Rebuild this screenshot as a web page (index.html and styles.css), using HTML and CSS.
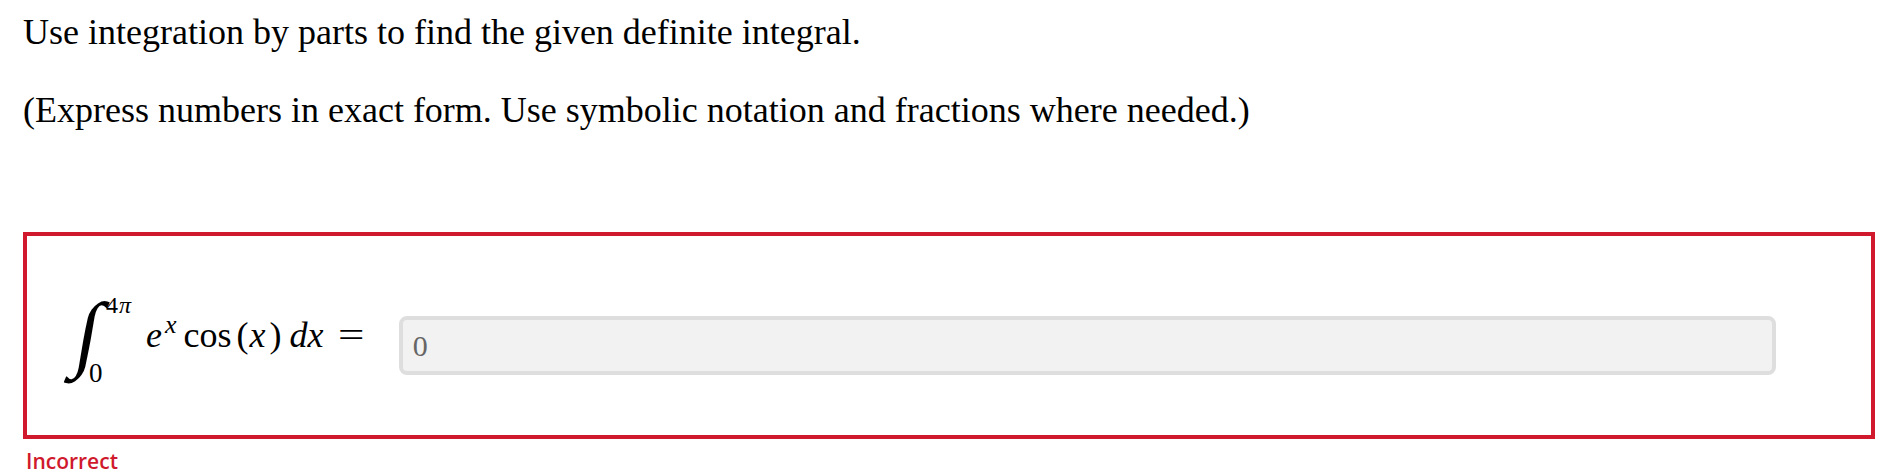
FILE: index.html
```html
<!DOCTYPE html>
<html lang="en">
<head>
<meta charset="utf-8">
<title>Integration by parts</title>
<link rel="stylesheet" href="styles.css">
</head>
<body>
<div class="page">
  <p class="prompt">Use integration by parts to find the given definite integral.</p>
  <p class="prompt">(Express numbers in exact form. Use symbolic notation and fractions where needed.)</p>
  <div class="answer-box">
    <div class="math">
      <span class="int">∫</span>
      <span class="limits">
        <span class="sup">4<i class="pi">π</i></span>
        <span class="sub">0</span>
      </span>
      <span class="expr"><i>e</i><span class="exp"><i>x</i></span><span class="fn">cos</span><span class="paren">(<i class="arg">x</i>)</span><i class="d">d</i><i>x</i><span class="eq">=</span></span>
    </div>
    <div class="answer-input">0</div>
  </div>
  <div class="feedback">Incorrect</div>
</div>
</body>
</html>
```

FILE: styles.css
```css
html, body {
  margin: 0;
  padding: 0;
  background: #ffffff;
}

.page {
  padding: 12px 19px 0 23px;
  font-family: "Liberation Serif", "Times New Roman", serif;
  color: #000000;
}

.prompt {
  margin: 0 0 37px 0;
  font-size: 36px;
  line-height: 41px;
}

.prompt + .prompt {
  margin-bottom: 0;
}

.answer-box {
  box-sizing: border-box;
  margin-top: 101px;
  height: 207px;
  border: 4px solid #d0192c;
  display: flex;
  align-items: center;
  padding: 20px 95px 0 40px;
}

.math {
  display: flex;
  align-items: flex-start;
  height: 97px;
  font-family: "Liberation Serif", "Times New Roman", serif;
  color: #000;
}

.int {
  display: block;
  font-size: 84px;
  line-height: 88px;
  height: 88px;
  margin-top: -8px;
  margin-left: 10px;
  transform: skewX(-10deg);
}

.limits {
  display: flex;
  flex-direction: column;
  width: 30px;
  margin-left: 6px;
}

.sup {
  font-size: 24px;
  line-height: 24px;
  margin-top: -4px;
  white-space: nowrap;
}

.pi {
  margin-left: 1px;
}

.sub {
  font-size: 27px;
  line-height: 27px;
  margin-top: 43px;
  margin-left: -17px;
}

.expr {
  display: flex;
  align-items: baseline;
  font-size: 36px;
  line-height: 40px;
  margin-top: 18px;
  margin-left: 10px;
  white-space: nowrap;
}

.exp {
  font-size: 26px;
  position: relative;
  top: -14px;
  margin-left: 3px;
}

.fn {
  margin-left: 7px;
}

.paren {
  margin-left: 5px;
}

.arg {
  margin: 0 4px 0 1px;
}

.d {
  margin-left: 8px;
}

.eq {
  display: inline-block;
  margin-left: 14px;
  transform: scaleX(1.3);
  transform-origin: left center;
}

.answer-input {
  box-sizing: border-box;
  flex: 1;
  height: 59px;
  margin-left: 41px;
  border: 4px solid #dedede;
  border-radius: 8px;
  background: #f2f2f2;
  padding: 0 10px;
  display: flex;
  align-items: center;
  font-family: "Liberation Serif", "Times New Roman", serif;
  font-size: 30px;
  color: #666666;
}

.feedback {
  margin: 8px 0 0 3px;
  font-family: "Open Sans", "Noto Sans", sans-serif;
  font-weight: 600;
  font-size: 21px;
  color: #d0192c;
}
```
